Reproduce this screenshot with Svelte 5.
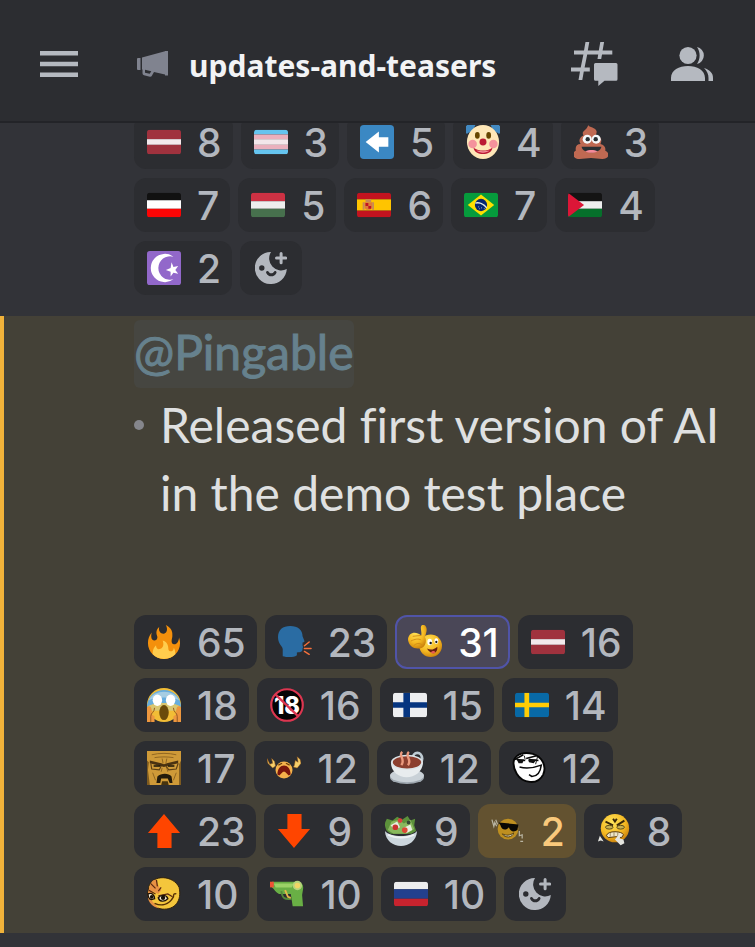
<script>
  const earlier = [
    { icon: "latvia", count: 8 },
    { icon: "trans", count: 3 },
    { icon: "left", count: 5 },
    { icon: "clown", count: 4 },
    { icon: "poop", count: 3 },
    { icon: "empire", count: 7 },
    { icon: "hungary", count: 5 },
    { icon: "spain", count: 6 },
    { icon: "brazil", count: 7 },
    { icon: "palestine", count: 4 },
    { icon: "crescent", count: 2 },
  ];

  const latest = [
    { icon: "fire", count: 65 },
    { icon: "speaking", count: 23 },
    { icon: "thumbs", count: 31, mine: true },
    { icon: "latvia", count: 16 },
    { icon: "scream", count: 18 },
    { icon: "underage", count: 16 },
    { icon: "finland", count: 15 },
    { icon: "sweden", count: 14 },
    { icon: "stare", count: 17 },
    { icon: "agony", count: 12 },
    { icon: "coffee", count: 12 },
    { icon: "smug", count: 12 },
    { icon: "up", count: 23 },
    { icon: "down", count: 9 },
    { icon: "salad", count: 9 },
    { icon: "cool", count: 2, burst: true },
    { icon: "grit", count: 8 },
    { icon: "cursed", count: 10 },
    { icon: "pistol", count: 10 },
    { icon: "russia", count: 10 },
  ];

  // horizontal stripes, top to bottom
  const stripes = {
    latvia: [["#a0323e", 10], ["#f3e9ec", 6], ["#a0323e", 10]],
    trans: [["#65c4ef", 5], ["#eab0bd", 5], ["#f3e6ea", 6], ["#eab0bd", 5], ["#65c4ef", 5]],
    empire: [["#111111", 8], ["#ffffff", 9], ["#fb0505", 9]],
    hungary: [["#cd3143", 9], ["#eeeeee", 8], ["#47704d", 9]],
    spain: [["#c3131f", 7], ["#ffc400", 12], ["#c3131f", 7]],
    brazil: [["#069b3c", 26]],
    palestine: [["#141414", 9], ["#eeeeee", 8], ["#06702b", 9]],
    finland: [["#edeef0", 26]],
    sweden: [["#0869a6", 26]],
    russia: [["#eeeeee", 8], ["#23408e", 10], ["#c7232e", 8]],
  };

  function offset(bands, i) {
    return 5 + bands.slice(0, i).reduce((sum, band) => sum + band[1], 0);
  }
</script>

{#snippet flag(name)}
  <g clip-path="url(#flag)">
    {#each stripes[name] as [fill, height], i}
      <rect x="0" y={offset(stripes[name], i)} width="36" {height} {fill} />
    {/each}
    {#if name === "spain"}
      <path d="M8 15h8v5c0 4-8 4-8 0z" fill="#df7b38" />
      <path d="M6 15h2v8H6zM16 15h2v8h-2zM9 12h6v3H9z" fill="#c98a55" />
      <path d="M9 16h3v3H9zM12 19h3v3h-3z" fill="#c3131f" />
    {:else if name === "brazil"}
      <path d="M18 7l14 11-14 11L4 18z" fill="#fedf01" />
      <circle cx="18" cy="18" r="6.500" fill="#062672" />
      <path d="M12 16c4-1 9 1 12 5" fill="none" stroke="#dfe8e5" stroke-width="1.600" />
      <path d="M15 20h1M18 21h1M16 22h1M21 22h1" stroke="#9ab5c9" />
    {:else if name === "palestine"}
      <path d="M0 5l17 13L0 31z" fill="#dc1637" />
    {:else if name === "finland"}
      <path d="M0 15h11V5h7v10h18v6H18v10h-7V21H0z" fill="#063580" />
    {:else if name === "sweden"}
      <path d="M0 15.500h10V5h5v10.500h21v5H15V31h-5V20.500H0z" fill="#ffcc05" />
    {/if}
  </g>
{/snippet}

{#snippet emoji(name)}
  <svg class="emoji" viewBox="0 0 36 36" aria-hidden="true">
    {#if stripes[name]}
      {@render flag(name)}
    {:else if name === "left"}
      <rect width="36" height="36" rx="4" fill="#3b88c3" />
      <path d="M6 18L20 7v6h10v10H20v6z" fill="#fff" />
    {:else if name === "clown"}
      <path d="M1 0h9L6 8H0V2zM35 0h-9l4 8h6V2z" fill="#4289c1" />
      <ellipse cx="18" cy="18" rx="17" ry="18" fill="#fee7b8" />
      <path d="M0 1h7l-5 8H0zM36 1h-7l5 8h2z" fill="#4289c1" />
      <circle cx="7" cy="20" r="4.500" fill="#f4929c" />
      <circle cx="29" cy="20" r="4.500" fill="#f4929c" />
      <ellipse cx="12" cy="11" rx="2.500" ry="3.500" fill="#664500" />
      <ellipse cx="24" cy="11" rx="2.500" ry="3.500" fill="#664500" />
      <path d="M8 24c6 4 14 4 20 0-1 9-19 9-20 0z" fill="#bb1a34" />
      <path d="M11 27c5 1 9 1 14 0-3 3-11 3-14 0z" fill="#f4929c" />
      <circle cx="18" cy="18" r="3.700" fill="#bb1a34" />
    {:else if name === "poop"}
      <path
        d="M15 0c1 3 8 2 9 7 0 2-1 4-1 4 6 1 7 5 5 9 4 1 6 4 5 7 6 3 4 9-3 9-4 0-8-1-12-1s-8 1-12 1c-7 0-9-6-4-9-1-4 1-7 5-7-3-4 0-8 3-9-3-5 4-5 5-11z"
        fill="#bf6952"
      />
      <circle cx="14" cy="15" r="4.800" fill="#f5f8fa" />
      <circle cx="23.500" cy="15" r="4.800" fill="#f5f8fa" />
      <circle cx="14.500" cy="15" r="2.300" fill="#292f33" />
      <circle cx="23" cy="15" r="2.300" fill="#292f33" />
      <path d="M8 23h21c-1 8-20 8-21 0z" fill="#292f33" />
      <path d="M12 28c4-2 9-2 13 0-4 2-9 2-13 0z" fill="#f48a9a" />
    {:else if name === "crescent"}
      <rect width="36" height="36" rx="3" fill="#9268ca" />
      <path d="M28 6A15 15 0 1 0 28 30 12.500 12.500 0 1 1 28 6z" fill="#fff" />
      <path d="M26 12l2 5 5-1-3 4 3 4-5-1-3 4v-5l-5-2 5-2z" fill="#fff" />
    {:else if name === "fire"}
      <path
        d="M35 19c0-2.062-.367-4.039-1.040-5.868-.46 5.389-3.333 8.157-6.335 6.868-2.812-1.208-.917-5.917-.777-8.164.236-3.809-.012-8.169-6.931-11.794 2.875 5.500.333 8.917-2.333 9.125-2.958.231-5.667-2.542-4.667-7.042-3.238 2.386-3.332 6.402-2.333 9 1.042 2.708-.042 4.958-2.583 5.208-2.840.28-4.418-3.041-2.963-8.333C2.520 10.965 1 14.805 1 19c0 9.389 7.611 17 17 17s17-7.611 17-17z"
        fill="#f4900c"
      />
      <path
        d="M28.394 23.999c.148 3.084-2.561 4.293-4.019 3.709-2.106-.843-1.541-2.291-2.083-5.291s-2.625-5.083-5.708-6c2.250 6.333-1.247 8.667-3.080 9.084-1.872.426-3.753-.001-3.968-4.007C7.352 23.668 6 26.676 6 30c0 .368.023.73.055 1.090C9.125 34.124 13.342 36 18 36s8.875-1.876 11.945-4.910c.032-.36.055-.722.055-1.090 0-2.187-.584-4.236-1.606-6.001z"
        fill="#ffcc4d"
      />
    {:else if name === "speaking"}
      <path
        d="M13 1c8 0 13 4 13 11l2 5c0 2-2 1-2 2v3c1 1 0 3 0 3 0 4-2 4-6 4v3c-4 3-11 2-15 1v-6c1-4-5-6-5-14C0 5 5 1 13 1z"
        fill="#2a6ca3"
      />
      <path
        d="M28 22l5-4M28 25h7M28 28l5 3"
        stroke="#f4703c"
        stroke-width="1.600"
        stroke-linecap="round"
      />
    {:else if name === "thumbs"}
      <circle cx="24" cy="22" r="12" fill="url(#gold)" />
      <path
        d="M14 11c1-4-2-9 1-11 4-1 6 4 4 9l-1 4c2 3 1 9-3 11-7 3-14-1-15-8C0 8 8 6 14 11z"
        fill="url(#gold)"
      />
      <path
        d="M5 12l9-1M3 17c4-2 8-3 11-1M6 22c3-3 6-3 9-1"
        stroke="#d18c15"
        fill="none"
      />
      <ellipse cx="23" cy="18" rx="2.500" ry="3.500" fill="#fff" />
      <ellipse cx="30" cy="17" rx="2" ry="3" fill="#fff" />
      <circle cx="24" cy="19" r="1.300" fill="#1b1b1b" />
      <circle cx="30" cy="18" r="1.200" fill="#1b1b1b" />
      <path d="M20 25c4 2 8 1 11-2 1 6-5 11-11 2z" fill="#67200f" />
      <path d="M24 29c2-2 4-2 5 0-2 2-4 1-5 0z" fill="#e65b53" />
    {:else if name === "scream"}
      <circle cx="18" cy="18" r="18" fill="#f2bd36" />
      <path d="M0 20a18 18 0 1 1 36 0c-8-5-28-5-36 0z" fill="#67addd" />
      <path d="M2 13C7 1 29 1 34 13c-8-4-24-4-32 0z" fill="#a6cde2" />
      <path d="M2 19c8-4 24-4 32 0v5H2z" fill="#d9c772" />
      <ellipse cx="11" cy="13" rx="5" ry="6" fill="#fff" />
      <ellipse cx="25" cy="13" rx="5" ry="6" fill="#fff" />
      <ellipse cx="18" cy="26" rx="5" ry="8" fill="#694a0b" />
      <path d="M0 36V21c3-4 6 0 5 7l3 2v6zM36 36V21c-3-4-6 0-5 7l-3 2v6z" fill="#ed973f" />
      <path
        d="M4 36v-6c0-4 4-4 4-9M32 36v-6c0-4-4-4-4-9"
        stroke="#8f5420"
        fill="none"
      />
    {:else if name === "underage"}
      <circle cx="18" cy="18" r="17" fill="#050505" />
      <text x="18" y="27" text-anchor="middle" class="eighteen">18</text>
      <path d="M6 7l24 23" stroke="#dd3650" stroke-width="2.500" />
      <circle cx="18" cy="18" r="16.700" fill="none" stroke="#dd3650" stroke-width="2.300" />
    {:else if name === "stare"}
      <rect width="36" height="36" fill="#cf9a38" />
      <path d="M0 10l2 2-1 8 2 16H0zM36 10l-2 4v22h2z" fill="#7d5a20" />
      <path d="M3 10l12 3 3 1 3-1 12-3v3l-12 3-3 1-4-1-11-3z" fill="#4a3211" />
      <path d="M4 13l1 6 8 1 2-4M20 16l3 4 8-1 2-6" fill="none" stroke="#5c3f15" stroke-width="1.200" />
      <path d="M7 16h7M22 16h7" stroke="#171309" stroke-width="1.600" />
      <path d="M5 4c8-2 18-2 26 0M8 7c6-1 14-1 20 0M16 8l1 5M21 8l-1 5M16 18l-1 4M21 18l1 4" fill="none" stroke="#8e6420" />
      <path d="M10 34l1-7c4-4 12-4 15 0l1 7h-3l-2-5h-7l-1 5z" fill="#241b0b" />
      <path d="M16 32h6l1 4h-8z" fill="#46330f" />
      <path d="M6 23l3 8M31 23l-3 8" stroke="#8e6420" fill="none" />
    {:else if name === "agony"}
      <circle cx="18" cy="20" r="9" fill="#f5b24b" />
      <path d="M11 25c0-13 14-13 14 0l-2 1-4-4h-2l-4 4z" fill="#7a170c" />
      <path d="M12 15l4-2M20 13l4 2" stroke="#6c3d07" stroke-width="1.300" />
      <path
        d="M3 14l3-1-1-5 3 3 1 5-3 2-5-5-1-5zM29 15l1-5 3 2-1-6 3 3 1 4-4 5-4-1z"
        fill="#f6cf6b"
        stroke="#a85f13"
        stroke-width=".5"
      />
    {:else if name === "coffee"}
      <ellipse cx="18" cy="28" rx="18" ry="7" fill="#9fa8b0" />
      <ellipse cx="18" cy="26" rx="18" ry="7" fill="#c9d1d7" />
      <ellipse cx="29" cy="8" rx="5" ry="6" fill="none" stroke="#becbd3" stroke-width="3" />
      <path d="M1 12c0 21 33 21 34 0z" fill="#e8ecee" />
      <ellipse cx="18" cy="12" rx="17" ry="8" fill="#dce3e7" />
      <ellipse cx="18" cy="12" rx="15" ry="6.500" fill="#8c3f2f" />
      <path
        d="M13 1c-5 4 4 7-1 14M20 1c-5 5 4 8-1 14"
        fill="none"
        stroke="#ec9a7e"
        stroke-width="2.500"
      />
    {:else if name === "smug"}
      <path
        d="M2 10C5 2 14 1 22 3c10 3 15 13 11 22-6 12-22 9-28-1C2 19 1 14 2 10z"
        fill="#fff"
        stroke="#060606"
        stroke-width="2"
      />
      <path
        d="M3 9l9-5M15 8l11-3M5 9l9 1M18 9l10 1M8 17c7 2 15 1 23-2-1 8-4 12-10 12l-3-2"
        fill="none"
        stroke="#080808"
        stroke-width="1.600"
      />
      <path d="M5 9h8l-2 4H7zM17 9h9l-3 4-5-1z" fill="#111" />
      <path d="M13 5l1 4M27 6l-2 8" fill="none" stroke="#111" />
    {:else if name === "up"}
      <path d="M18 0l17 20H26v16H11V20H1z" fill="#ff4500" />
    {:else if name === "down"}
      <path d="M18 36L1 16h10V0h15v16h9z" fill="#ff4500" />
    {:else if name === "salad"}
      <path d="M3 18C-1 10 2 8 3 5l6 2 5-4 5 3 6-4 3 5 5-2-1 7 2 6-5 3H7z" fill="#5c913b" />
      <path d="M4 17l4-9 8-2 5 4 7-4 4 10-8 5H10z" fill="#89b85d" />
      <path d="M7 12l7-4 3 6-6 3zM20 15l8-4 2 6-6 3z" fill="#e7eee0" />
      <circle cx="17" cy="7" r="2.500" fill="#df3e3d" />
      <circle cx="12" cy="14" r="3" fill="#c93330" />
      <circle cx="22" cy="17" r="3" fill="#dd4935" />
      <circle cx="26" cy="9" r="2" fill="#354733" />
      <path d="M1 18c6 7 28 7 34 0-1 21-33 21-34 0z" fill="#ccd6dd" />
      <path d="M4 22c8 4 20 4 28 0" stroke="#eef1f3" stroke-width="2" fill="none" />
    {:else if name === "cool"}
      <circle cx="18" cy="16" r="11" fill="#be8f20" />
      <path d="M8 9l21 2-1 6c-4 3-8 1-9-3-3 4-8 3-9-2z" fill="#090805" />
      <path d="M12 21c4 2 8 2 12-1-1 5-9 6-12 1z" fill="#e2dfcc" stroke="#4f390b" />
      <path
        d="M1 6l2 7 1-4 2 4M5 6l2 5M30 18v5l3-1v4M31 29h3"
        fill="none"
        stroke="#b9b5a3"
        stroke-width="1.300"
      />
    {:else if name === "grit"}
      <circle cx="19" cy="15" r="15" fill="url(#gold)" />
      <path
        d="M9 8l8 4M29 7l-8 5M17 5l2 3 2-3"
        fill="none"
        stroke="#392709"
        stroke-width="2"
      />
      <ellipse cx="13" cy="14" rx="4" ry="2" fill="#c9b24f" stroke="#5a4614" />
      <ellipse cx="25" cy="14" rx="4" ry="2" fill="#c9b24f" stroke="#5a4614" />
      <path d="M10 23c1-6 17-5 18-1l-2 3-6-1-8 1z" fill="#eee6cb" stroke="#513207" />
      <path d="M14 20v4M18 19v5M22 19v5" stroke="#9e8c61" />
      <path d="M1 29l2-6 2 3 2 3-3-1zM19 27l4-5 2 1-1 3 4 1 1 4-4 2z" fill="#e4e4df" />
    {:else if name === "cursed"}
      <path
        d="M2 10C6-3 28-2 34 11c3 14-4 24-18 23C7 33 0 25 1 17z"
        fill="#f4c63c"
        stroke="#302009"
      />
      <path d="M2 13c2-11 9-13 9-6l4 7-3 4-6-3-1 10c5 6 6 7 8 8-8-1-15-8-11-20z" fill="#e89144" />
      <path
        d="M4 7l5 5M10 3l1 7M15 11l-3 4M2 14l7 4M12 20l10-2 5 3"
        fill="none"
        stroke="#5a2810"
        stroke-width="1.300"
      />
      <path d="M1 18c4-2 7 1 7 5-4 2-7 0-7-5zM12 22c3-4 9-3 10 1-4 4-9 3-10-1z" fill="#f9efd8" stroke="#1d1206" stroke-width="1.500" />
      <circle cx="5" cy="21" r="2" fill="#181008" />
      <circle cx="17" cy="22" r="2.300" fill="#181008" />
      <path d="M8 28c7 3 15 2 20-7 0-3 1-4 3-3" fill="none" stroke="#563006" stroke-width="1.500" />
    {:else if name === "pistol"}
      <path d="M2 5h25c6 0 9 3 8 8l-1 6 1 12H24l-2-13H11C7 18 5 13 2 11z" fill="#69af45" />
      <path d="M4 7h21l-2 4H6z" fill="#9bd267" />
      <path d="M12 15c1 8 4 9 11 8" fill="none" stroke="#53883a" stroke-width="2" />
      <path d="M16 14l3 7 3 1" fill="none" stroke="#e6b84b" stroke-width="2" />
      <path d="M0 5h4v6H0z" fill="#ef5135" />
      <circle cx="29" cy="9" r="5" fill="#b5d37b" />
      <circle cx="29" cy="9" r="3" fill="#f1d466" />
    {/if}
  </svg>
{/snippet}

{#snippet reactions(list)}
  <div class="reactions">
    {#each list as item}
      <button
        class="reaction"
        class:mine={item.mine}
        class:burst={item.burst}
        aria-label={`${item.icon}, ${item.count} reactions`}
        aria-pressed={item.mine ? "true" : "false"}
      >
        {@render emoji(item.icon)}
        <span>{item.count}</span>
      </button>
    {/each}
    <button class="reaction add" aria-label="Add reaction">
      <svg viewBox="0 0 32 32" fill="currentColor">
        <path
          fill-rule="evenodd"
          d="M16 0A16 16 0 1 0 31.800 17A12 12 0 0 1 16 0zM9.500 16a2.700 2.700 0 1 1-5.400 0 2.700 2.700 0 0 1 5.400 0zM12.500 19c-1 0-1.700 1-1.300 1.900 2 4.500 8.200 4.500 10.200 0 .4-.9-.3-1.900-1.300-1.900-.6 0-1 .4-1.300.9-1 1.900-4 1.900-5 0-.3-.5-.7-.9-1.300-.9z"
        />
        <path d="M24.600 1.500a1.500 1.500 0 0 1 3 0v3.100h3.100a1.500 1.500 0 0 1 0 3h-3.100v3.100a1.500 1.500 0 0 1-3 0V7.600h-3.100a1.500 1.500 0 0 1 0-3h3.100z" />
      </svg>
    </button>
  </div>
{/snippet}

<svg class="defs" aria-hidden="true">
  <defs>
    <clipPath id="flag"><rect y="5" width="36" height="26" rx="3" /></clipPath>
    <radialGradient id="gold" cx=".4" cy=".3" r=".75">
      <stop offset="0" stop-color="#ffe45c" />
      <stop offset=".6" stop-color="#f5b922" />
      <stop offset="1" stop-color="#c77d0b" />
    </radialGradient>
  </defs>
</svg>

<div class="app">
  <header>
    <button class="tool menu" aria-label="Open menu">
      <svg viewBox="0 0 38 26" fill="currentColor">
        <path d="M0 0h38v4.500H0zM0 10.700h38v4.500H0zM0 21.400h38v4.500H0z" />
      </svg>
    </button>
    <svg class="megaphone" viewBox="0 0 32 26" fill="currentColor" aria-hidden="true">
      <path d="M0 8a1 1 0 0 1 1-1h2.500v12H1a1 1 0 0 1-1-1z" />
      <path
        fill-rule="evenodd"
        d="M5 6.500L28 .3V0h3v24.500h-3v-1L17 21l-2 3.500a2 2 0 0 1-2 1.200l-6-1.400a2 2 0 0 1-1.500-2V18.500H5zM8 18.700v3l4.700 1.100 1.600-2.600z"
      />
    </svg>
    <h1>updates-and-teasers</h1>
    <button class="tool threads" aria-label="Threads">
      <svg viewBox="0 0 46 44" fill="currentColor">
        <path
          d="M14.500 0h3.800l-1.500 8.500h11L29.300 0h3.800l-1.500 8.500h9.700v4H31L30.200 17H26.500l.7-4.500h-11L13.600 25.500h5.200v4h-6L11.300 38H7.500L9 29.500H0v-4h9.700L12.400 12.500H3v-4h10z"
        />
        <path d="M24.500 21h20.500a1.500 1.500 0 0 1 1.500 1.500v14.800a1.500 1.500 0 0 1-1.500 1.500H33.500L27.300 44v-5.200h-2.800a1.500 1.500 0 0 1-1.500-1.500V22.500a1.500 1.500 0 0 1 1.500-1.500z" />
      </svg>
    </button>
    <button class="tool members" aria-label="Members">
      <svg viewBox="0 0 42 34" fill="currentColor">
        <circle cx="17" cy="8.500" r="8.600" />
        <path d="M0 34v-3C0 23 8 19 17 19s17 4 17 12v3zM26 0a8.700 8.700 0 0 1 0 17c3.500-5 3.500-12 0-17zM33 21c6 2 9 5 9 10v3h-4.500v-3c0-4-1.500-7-4.500-10z" />
      </svg>
    </button>
  </header>

  <main>
    <article class="message">
      {@render reactions(earlier)}
    </article>

    <article class="message mentioned">
      <a class="mention" href="#pingable">@Pingable</a>
      <ul>
        <li>Released first version of AI in the demo test place</li>
      </ul>
      {@render reactions(latest)}
    </article>
  </main>
</div>

<style>
  :global(body) {
    margin: 0;
    background: #323338;
  }

  .defs {
    position: absolute;
    width: 0;
    height: 0;
  }

  .app {
    display: flex;
    flex-direction: column;
    height: 100vh;
    overflow: hidden;
    color: #dfe0e1;
    font-family: Lato, sans-serif;
    font-variant-ligatures: none;
  }

  button {
    border: 0;
    font: inherit;
    cursor: pointer;
  }

  svg {
    display: block;
  }

  header {
    position: relative;
    z-index: 1;
    display: flex;
    flex: none;
    align-items: center;
    box-sizing: border-box;
    height: 123px;
    padding: 6px 42px 0 40px;
    border-bottom: 2px solid #232428;
    background: #2c2d31;
  }

  .tool {
    flex: none;
    padding: 0;
    background: none;
    color: #b5b9c0;
  }

  .tool svg {
    overflow: visible;
  }

  .menu {
    width: 38px;
  }

  .megaphone {
    flex: none;
    width: 32px;
    margin-left: 59px;
    color: #80838f;
  }

  h1 {
    flex: 1;
    min-width: 0;
    margin: 0 0 0 20px;
    padding-top: 4px;
    color: #f2f3f5;
    font-family: "Noto Sans", sans-serif;
    font-size: 30px;
    font-weight: 700;
    line-height: 40px;
    white-space: nowrap;
  }

  .threads {
    width: 46px;
  }

  .members {
    width: 42px;
    margin-left: 54px;
  }

  /* the list is pinned to its newest message */
  main {
    display: flex;
    flex: 1;
    flex-direction: column;
    justify-content: flex-end;
    min-height: 0;
    padding-bottom: 14px;
  }

  .message {
    padding: 0 24px 21px 134px;
  }

  .mentioned {
    padding: 4px 24px 12px 130px;
    border-left: 4px solid #f0b23a;
    background: #444137;
  }

  .mention {
    display: inline-block;
    padding-bottom: 4px;
    border-radius: 6px;
    background: #464641;
    color: #66818d;
    font-size: 48px;
    line-height: 64px;
    text-decoration: none;
    vertical-align: top;
    -webkit-text-stroke: 1px #66818d;
  }

  ul {
    margin: 3px 0 88px;
    padding: 0;
    list-style: none;
  }

  li {
    display: flex;
    gap: 16px;
    font-size: 48px;
    line-height: 68px;
  }

  li::before {
    content: "";
    flex: none;
    width: 10px;
    height: 10px;
    margin-top: 29px;
    border-radius: 50%;
    background: #85868c;
  }

  .reactions {
    display: flex;
    flex-wrap: wrap;
    gap: 9px 8px;
  }

  .reaction {
    display: flex;
    align-items: center;
    gap: 16px;
    box-sizing: border-box;
    height: 54px;
    padding: 0 11px 0 13px;
    border-radius: 12px;
    background: #2c2d31;
    color: #b3b7be;
    font-family: Inter, sans-serif;
    font-size: 39px;
    font-weight: 500;
    line-height: 36px;
  }

  .reaction span {
    padding-top: 2px;
  }

  .emoji {
    width: 34px;
    height: 34px;
  }

  .eighteen {
    fill: #fff;
    font-size: 25px;
    font-weight: 800;
  }

  .mine {
    padding: 0 9px 0 11px;
    border: 2px solid #5054a8;
    background: #4a4757;
    color: #fff;
  }

  .burst {
    background: #635230;
    color: #f9c97c;
  }

  .add {
    padding: 0 15px;
  }

  .add svg {
    width: 32px;
    height: 32px;
  }
</style>
